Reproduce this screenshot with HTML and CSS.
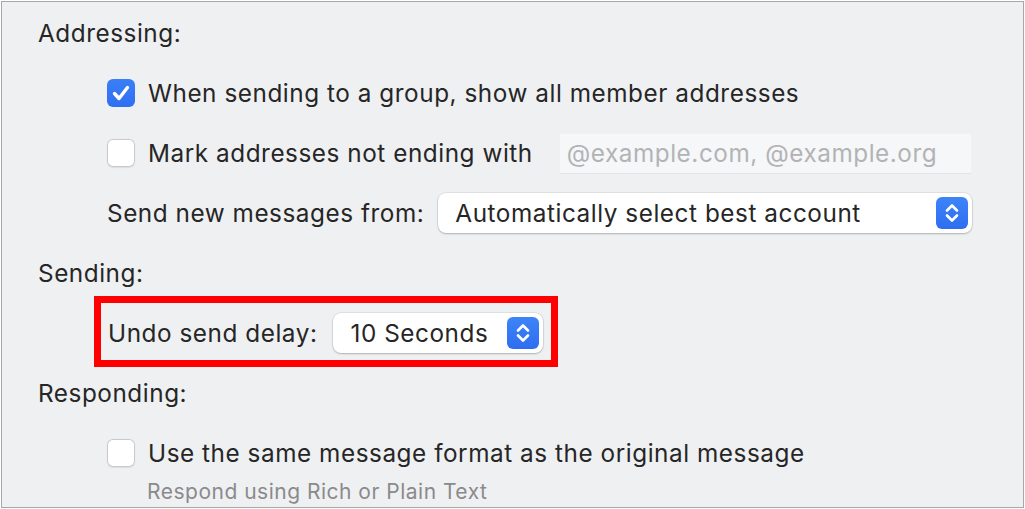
FILE: index.html
```html
<!DOCTYPE html>
<html>
<head>
<meta charset="utf-8">
<link rel="stylesheet" href="styles.css">
</head>
<body>
<div class="window">
  <div class="row heading">Addressing:</div>
  <div class="row indent">
    <span class="checkbox checked">
      <svg viewBox="0 0 28 28" width="28" height="28"><path d="M7.5 14.5 L12 19.5 L20.5 8.5" fill="none" stroke="#fff" stroke-width="3.4" stroke-linecap="round" stroke-linejoin="round"/></svg>
    </span>
    <span class="label">When sending to a group, show all member addresses</span>
  </div>
  <div class="row indent">
    <span class="checkbox"></span>
    <span class="label">Mark addresses not ending with</span>
    <span class="field">@example.com, @example.org</span>
  </div>
  <div class="row indent">
    <span class="plain">Send new messages from:</span>
    <span class="popup wide">
      <span class="popup-text">Automatically select best account</span>
      <span class="stepper"><svg viewBox="0 0 32 32" width="32" height="32"><path d="M11 13.5 L16 8.5 L21 13.5 M11 18.5 L16 23.5 L21 18.5" fill="none" stroke="#fff" stroke-width="2.6" stroke-linecap="round" stroke-linejoin="round"/></svg></span>
    </span>
  </div>
  <div class="row heading">Sending:</div>
  <div class="row indent">
    <span class="highlight">
      <span class="plain">Undo send delay:</span>
      <span class="popup small">
        <span class="popup-text">10 Seconds</span>
        <span class="stepper"><svg viewBox="0 0 32 32" width="32" height="32"><path d="M11 13.5 L16 8.5 L21 13.5 M11 18.5 L16 23.5 L21 18.5" fill="none" stroke="#fff" stroke-width="2.6" stroke-linecap="round" stroke-linejoin="round"/></svg></span>
      </span>
    </span>
  </div>
  <div class="row heading">Responding:</div>
  <div class="row indent">
    <span class="checkbox"></span>
    <span class="label">Use the same message format as the original message</span>
  </div>
  <div class="note">Respond using Rich or Plain Text</div>
</div>
</body>
</html>
```

FILE: styles.css
```css
* { box-sizing: border-box; }
html, body { margin: 0; padding: 0; background: #ffffff; }
body {
  font-family: Inter, "Noto Sans", "Liberation Sans", sans-serif;
  color: #262626;
}
.window {
  margin: 1px;
  width: 1023px;
  height: 507px;
  border: 1px solid #a8a8a8;
  background: #eff0f2;
  padding-top: 1px;
  overflow: hidden;
}
.row {
  height: 60px;
  display: flex;
  align-items: center;
  font-size: 24.3px;
  letter-spacing: 0.55px;
}
.heading { padding-left: 36px; }
.indent { padding-left: 105px; }
.checkbox {
  width: 28px;
  height: 28px;
  border-radius: 6px;
  background: #fff;
  box-shadow: 0 0 0 1px #c9c9cb inset, 0 0.5px 1px rgba(0,0,0,0.08);
  flex: none;
  display: flex;
}
.checkbox.checked {
  background: linear-gradient(#3a7ff7, #2f6ef2);
  box-shadow: none;
}
.label { margin-left: 13px; }
.field {
  margin-left: 27px;
  width: 411px;
  height: 39px;
  background: #f6f7f9;
  box-shadow: 0 1px 0 #e2e3e5;
  color: #b3b3b5;
  display: flex;
  align-items: center;
  padding-left: 7px;
}
.plain { flex: none; }
.popup {
  display: flex;
  align-items: center;
  height: 40px;
  background: #fff;
  border-radius: 8px;
  box-shadow: 0 0 0 0.5px rgba(0,0,0,0.12), 0 1px 2px rgba(0,0,0,0.22);
  padding-right: 4px;
}
.popup.wide { margin-left: 14px; width: 534px; }
.popup.small { margin-left: 16px; width: 210px; }
.popup-text { flex: 1; padding-left: 17px; }
.stepper {
  width: 32px;
  height: 32px;
  border-radius: 6px;
  background: linear-gradient(#3d84f8, #2e6df1);
  display: flex;
  flex: none;
}
.highlight {
  position: relative;
  display: flex;
  align-items: center;
  margin-left: 1px;
}
.highlight::after {
  content: "";
  position: absolute;
  left: -14px;
  right: -15px;
  top: -17px;
  bottom: -14px;
  border: 7px solid #ff0000;
}
.note {
  padding-left: 145px;
  font-size: 21px;
  letter-spacing: 0.5px;
  color: #8a8a8c;
  margin-top: -4px;
}
```
